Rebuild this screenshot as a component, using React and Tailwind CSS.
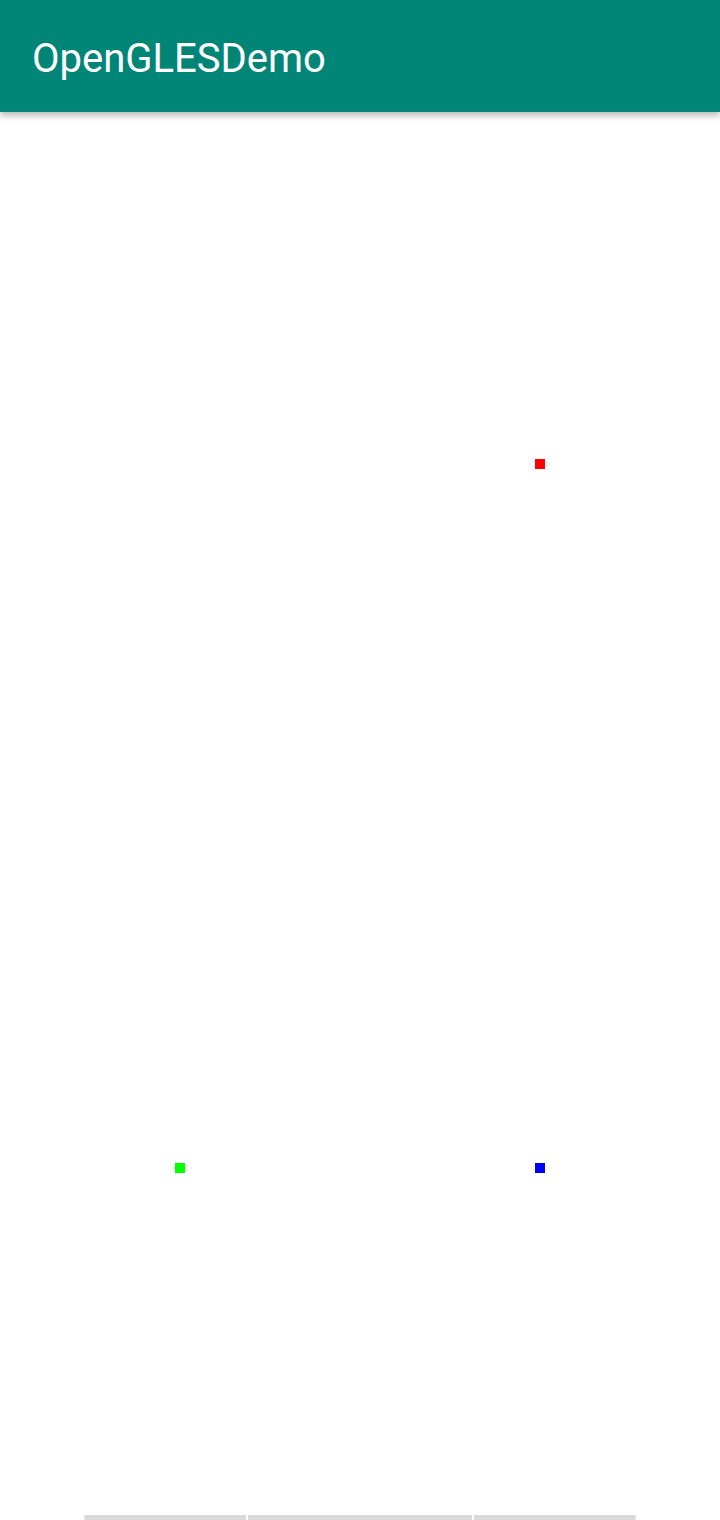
import React from "react";

// GL points drawn on the surface (page coords minus header height)
const points = [
  { color: "bg-[#ff0000]", left: "left-[535px]", top: "top-[347px]" },
  { color: "bg-[#00ff00]", left: "left-[175px]", top: "top-[1051px]" },
  { color: "bg-[#0000ff]", left: "left-[535px]", top: "top-[1051px]" },
];

const App = () => {
  return (
    <div className="flex flex-col w-[720px] h-[1520px] bg-white overflow-hidden" style={{ fontFamily: "Roboto, 'Noto Sans', sans-serif" }}>
      {/* Toolbar */}
      <div className="relative z-10 h-[112px] shrink-0 bg-[#008577] flex items-center pl-[32px] pt-[6px] shadow-[0_4px_6px_rgba(0,0,0,0.25)]">
        <h1 className="text-white text-[40px] leading-none font-normal">OpenGLESDemo</h1>
      </div>

      {/* GL surface */}
      <div className="relative flex-1">
        {points.map((p, i) => (
          <div key={i} className={`absolute w-[10px] h-[10px] ${p.color} ${p.left} ${p.top}`} />
        ))}
      </div>

      {/* bottom handle */}
      <div className="flex justify-center gap-[2px] h-[5px] shrink-0">
        <div className="w-[162px] bg-[#d9d9d9] rounded-tl-[3px] rounded-bl-[3px]" />
        <div className="w-[224px] bg-[#d9d9d9]" />
        <div className="w-[162px] bg-[#d9d9d9] rounded-tr-[3px] rounded-br-[3px]" />
      </div>
    </div>
  );
};

export default App;
